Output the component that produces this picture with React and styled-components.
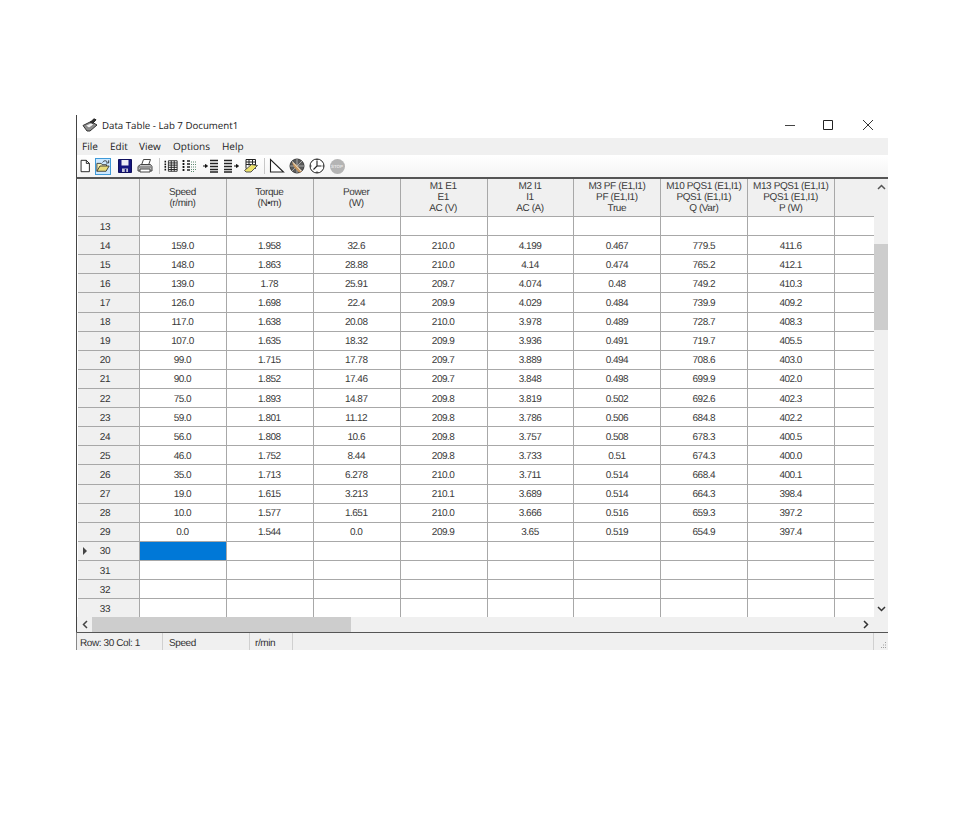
import React from 'react';
import styled, { createGlobalStyle } from 'styled-components';

const columns = [
  ['Speed', '(r/min)'],
  ['Torque', '(N•m)'],
  ['Power', '(W)'],
  ['M1 E1', 'E1', 'AC (V)'],
  ['M2 I1', 'I1', 'AC (A)'],
  ['M3 PF (E1,I1)', 'PF (E1,I1)', 'True'],
  ['M10 PQS1 (E1,I1)', 'PQS1 (E1,I1)', 'Q (Var)'],
  ['M13 PQS1 (E1,I1)', 'PQS1 (E1,I1)', 'P (W)'],
];

const rows = [
  [13],
  [14, '159.0', '1.958', '32.6', '210.0', '4.199', '0.467', '779.5', '411.6'],
  [15, '148.0', '1.863', '28.88', '210.0', '4.14', '0.474', '765.2', '412.1'],
  [16, '139.0', '1.78', '25.91', '209.7', '4.074', '0.48', '749.2', '410.3'],
  [17, '126.0', '1.698', '22.4', '209.9', '4.029', '0.484', '739.9', '409.2'],
  [18, '117.0', '1.638', '20.08', '210.0', '3.978', '0.489', '728.7', '408.3'],
  [19, '107.0', '1.635', '18.32', '209.9', '3.936', '0.491', '719.7', '405.5'],
  [20, '99.0', '1.715', '17.78', '209.7', '3.889', '0.494', '708.6', '403.0'],
  [21, '90.0', '1.852', '17.46', '209.7', '3.848', '0.498', '699.9', '402.0'],
  [22, '75.0', '1.893', '14.87', '209.8', '3.819', '0.502', '692.6', '402.3'],
  [23, '59.0', '1.801', '11.12', '209.8', '3.786', '0.506', '684.8', '402.2'],
  [24, '56.0', '1.808', '10.6', '209.8', '3.757', '0.508', '678.3', '400.5'],
  [25, '46.0', '1.752', '8.44', '209.8', '3.733', '0.51', '674.3', '400.0'],
  [26, '35.0', '1.713', '6.278', '210.0', '3.711', '0.514', '668.4', '400.1'],
  [27, '19.0', '1.615', '3.213', '210.1', '3.689', '0.514', '664.3', '398.4'],
  [28, '10.0', '1.577', '1.651', '210.0', '3.666', '0.516', '659.3', '397.2'],
  [29, '0.0', '1.544', '0.0', '209.9', '3.65', '0.519', '654.9', '397.4'],
  [30],
  [31],
  [32],
  [33],
];

const Icon = ({ children, size = 16 }) => (
  <svg width={size} height={size} viewBox="0 0 16 16" fill="none" stroke="#111" strokeWidth="1">
    {children}
  </svg>
);

const barStack = (x, w) => (
  <path
    d={[2.5, 5.5, 8.5, 11.5, 14].map((y) => `M${x} ${y}h${w}`).join('')}
    stroke="#222"
    strokeWidth="1.500"
  />
);

const tools = [
  { w: 14, icon: <path d="M3.500 1.500h6l3.500 3.500v9.500h-9.500zM9.500 1.500V5H13" fill="#fff" /> },
  {
    w: 22,
    active: true,
    icon: (
      <>
        <path d="M1 14V5h5l1 1.500h5V9" fill="#f6f2b4" stroke="#333" />
        <path d="M1 14l3.500-6H15l-3.500 6z" fill="#e9dc78" stroke="#333" />
        <path d="M7.500 4C9 1.500 11.500 1.500 13 3.500M14.500 1.500v3h-3" stroke="#222" />
      </>
    ),
  },
  {
    w: 22,
    icon: (
      <>
        <path d="M1.500 1.500h13v13h-13z" fill="#15157f" stroke="#10105e" />
        <path d="M4.500 2h7v5.500h-7z" fill="#eeeef6" stroke="none" />
        <path d="M5 10.500h6V14H5z" fill="#c8c8d8" stroke="none" />
        <path d="M8.500 11v3" stroke="#15157f" strokeWidth="1.500" />
      </>
    ),
  },
  {
    w: 18,
    icon: (
      <>
        <path d="M4.500 7l2-5.500h7L11.500 7" fill="#fff" stroke="#444" />
        <path d="M1 8.500L3.500 6.500h10L15 8.500v4.500H1z" fill="#c4c4c4" stroke="#444" />
        <path d="M3 11h10v3H3z" fill="#fff" stroke="#444" />
        <path d="M2 9h12" stroke="#666" />
      </>
    ),
  },
  { sep: true, w: 10 },
  {
    w: 14,
    icon: (
      <>
        <path d="M1.500 2v12" strokeWidth="1.800" strokeDasharray="2 1" />
        <path d="M5 2h10v12H5z" fill="#fff" stroke="#222" />
        <path d="M5 4.500h10M5 7h10M5 9.500h10M5 12h10M8.300 2v12M11.700 2v12" stroke="#222" strokeWidth="1.100" />
      </>
    ),
  },
  { w: 2 },
  {
    w: 20,
    icon: (
      <>
        <path d="M1.500 2v12" strokeWidth="1.800" strokeDasharray="2 1" />
        <path d="M5 3h3M5 6h3M5 9h3M5 12h3" stroke="#222" strokeWidth="1.500" />
        <path d="M9 4h6M9 6.500h6M9 9h6M9 11.500h6M9 13.500h4" stroke="#5d8a70" strokeWidth="1.200" strokeDasharray="1 1" />
      </>
    ),
  },
  { w: 1 },
  {
    w: 20,
    icon: (
      <>
        <path d="M0 8h3" />
        <path d="M2.500 6.500L4.500 8l-2 1.500z" fill="#111" />
        {barStack(7, 8)}
      </>
    ),
  },
  {
    w: 20,
    icon: (
      <>
        {barStack(1, 8)}
        <path d="M11 8h3" />
        <path d="M13.500 6.500L15.500 8l-2 1.500z" fill="#111" />
      </>
    ),
  },
  {
    w: 20,
    icon: (
      <>
        <path d="M3 1.500h9.500v9H3z" fill="#fff" stroke="#222" />
        <path d="M3 4h9.500M3 6.500h9.500M6 1.500v6M9.500 1.500v6" stroke="#222" />
        <path d="M1.500 12.500L8.500 6.500l6 1-6.500 6.500H3z" fill="#eee36a" stroke="#555" />
      </>
    ),
  },
  { sep: true, w: 6 },
  {
    w: 20,
    icon: <path d="M1.500 1.500v12.500H14.500z" fill="#fff" stroke="#222" strokeWidth="1.100" />,
  },
  {
    w: 20,
    icon: (
      <>
        <circle cx="8" cy="8" r="7" fill="#5a5a5a" stroke="#333" />
        <path d="M8 1v14M1 8h14M3 3l10 10M13 3L3 13" stroke="#bdbdbd" strokeWidth=".8" />
        <path d="M3 4l4 2.500 6 7-3 1-5-5.500z" fill="#c9985f" stroke="none" />
        <path d="M4 4.500l8 8.500" stroke="#e8dcc8" strokeWidth="1" />
      </>
    ),
  },
  {
    w: 20,
    icon: (
      <>
        <circle cx="8" cy="8" r="7" fill="#fff" stroke="#222" />
        <path d="M8 3v5M8 8l-3.500 3.500M8 8h4.500" stroke="#222" strokeWidth="1.100" />
        <path d="M8 1v1.500M15 8h-1.500M1 8h1.500M8 15v-1.500" stroke="#222" strokeWidth="1.200" />
      </>
    ),
  },
  { w: 20, stop: true },
];

const App = () => (
  <>
    <GlobalStyle />
    <Window>
      <TitleBar>
        <TitleGroup>
          <svg width="16" height="14" viewBox="0 0 16 14" fill="none">
            <path d="M1 7.500L9 3.500l6 3.500-7 6H5z" fill="#8f8f8f" stroke="#333" />
            <path d="M3.500 7.500L9 5l3 1.500-5 3.500z" fill="#f2f2f2" stroke="#666" strokeWidth=".6" />
            <path d="M8 4.500L12 .8l2 1-3.500 3.800" fill="#333" stroke="#222" />
          </svg>
          <TitleText>Data Table - Lab 7 Document1</TitleText>
        </TitleGroup>
        <WindowControls>
          <ControlButton $w={32}>
            <svg width="10" height="10" viewBox="0 0 10 10"><path d="M0 5.500h10" stroke="#444" /></svg>
          </ControlButton>
          <ControlButton $w={44}>
            <svg width="10" height="10" viewBox="0 0 10 10" fill="none"><path d="M.5.500h9v9h-9z" stroke="#222" /></svg>
          </ControlButton>
          <ControlButton $w={36}>
            <svg width="10" height="10" viewBox="0 0 10 10"><path d="M0 0l10 10M10 0L0 10" stroke="#333" /></svg>
          </ControlButton>
        </WindowControls>
      </TitleBar>
      <MenuBar>
        <MenuItem $w={28}>File</MenuItem>
        <MenuItem $w={29}>Edit</MenuItem>
        <MenuItem $w={34}>View</MenuItem>
        <MenuItem $w={49}>Options</MenuItem>
        <MenuItem $w={30}>Help</MenuItem>
      </MenuBar>
      <Toolbar>
        {tools.map((tool, i) =>
          tool.sep ? (
            <ToolSeparator key={i} $w={tool.w} />
          ) : (
            <ToolSlot key={i} $w={tool.w}>
              {tool.active ? <ActiveBox><Icon size={14}>{tool.icon}</Icon></ActiveBox> : null}
              {!tool.active && tool.icon ? <Icon>{tool.icon}</Icon> : null}
              {tool.stop ? <StopBadge>STOP</StopBadge> : null}
            </ToolSlot>
          ),
        )}
      </Toolbar>
      <GridArea>
        <GridColumn>
          <HeaderRow>
            <CornerCell />
            {columns.map((lines, i) => (
              <HeaderCell key={i}>
                {lines.map((line) => (
                  <div key={line}>{line}</div>
                ))}
              </HeaderCell>
            ))}
            <FillerHeader />
          </HeaderRow>
          {rows.map(([number, ...values]) => (
            <DataRow key={number}>
              <RowHeader>
                {number === 30 ? <RowMarker /> : null}
                {number}
              </RowHeader>
              {columns.map((_, i) => (
                <Cell key={i} $selected={number === 30 && i === 0}>
                  {values[i]}
                </Cell>
              ))}
              <Cell />
            </DataRow>
          ))}
        </GridColumn>
        <VerticalBar>
          <svg width="9" height="6" viewBox="0 0 9 6" fill="none"><path d="M1 5l3.500-3.500L8 5" stroke="#555" strokeWidth="1.500" /></svg>
          <VerticalThumb />
          <svg width="9" height="6" viewBox="0 0 9 6" fill="none"><path d="M1 1l3.500 3.500L8 1" stroke="#333" strokeWidth="1.500" /></svg>
        </VerticalBar>
      </GridArea>
      <HorizontalBar>
        <svg width="6" height="9" viewBox="0 0 6 9" fill="none"><path d="M5 1L1.500 4.500 5 8" stroke="#444" strokeWidth="1.500" /></svg>
        <HorizontalThumb />
        <svg width="6" height="9" viewBox="0 0 6 9" fill="none"><path d="M1 1l3.500 3.500L1 8" stroke="#333" strokeWidth="1.500" /></svg>
      </HorizontalBar>
      <StatusBar>
        <StatusCell $w={83}>Row: 30 Col: 1</StatusCell>
        <StatusCell $w={87} $indent={6}>Speed</StatusCell>
        <StatusCell $w={43} $indent={5}>r/min</StatusCell>
        <StatusFiller />
        <Grip>
          <svg width="8" height="8" viewBox="0 0 8 8">
            <path d="M6 1h1v1H6zM4 3.500h1v1H4zM6 3.500h1v1H6zM2 6h1v1H2zM4 6h1v1H4zM6 6h1v1H6z" fill="#a0a0a0" />
          </svg>
        </Grip>
      </StatusBar>
    </Window>
  </>
);

export default App;

const GlobalStyle = createGlobalStyle`
  html, body {
    margin: 0;
    background: #fff;
  }
  * {
    box-sizing: border-box;
  }
`;

const Window = styled.div`
  width: 812px;
  margin: 115px 0 0 76px;
  color: #333;
  font-family: 'Liberation Sans', Arial, sans-serif;
  text-rendering: geometricPrecision;
`;

const TitleBar = styled.div`
  display: flex;
  align-items: center;
  justify-content: space-between;
  height: 23px;
  padding: 0 0 3px 5px;
  border-left: 1px solid #444;
`;

const TitleGroup = styled.div`
  display: flex;
  align-items: center;
  gap: 4px;
`;

const TitleText = styled.span`
  font-family: 'Open Sans', sans-serif;
  font-size: 9.7px;
  color: #222;
`;

const WindowControls = styled.div`
  display: flex;
  margin: 0 2px 1px 0;
`;

const ControlButton = styled.div`
  display: flex;
  align-items: center;
  justify-content: center;
  width: ${(p) => p.$w}px;
  height: 20px;
`;

const MenuBar = styled.div`
  display: flex;
  align-items: center;
  height: 17px;
  padding: 0 0 2px 5px;
  background: #f0f0f0;
  border-left: 1px solid #444;
  font-family: 'Open Sans', sans-serif;
  font-size: 10px;
  color: #222;
`;

const MenuItem = styled.span`
  width: ${(p) => p.$w}px;
`;

const Toolbar = styled.div`
  display: flex;
  align-items: center;
  height: 24px;
  padding-left: 1px;
  background: linear-gradient(#ffffff, #f4f4f4);
  border-left: 1px solid #444;
  border-bottom: 2px solid #555;
`;

const ToolSlot = styled.div`
  display: flex;
  align-items: center;
  justify-content: center;
  flex: none;
  width: ${(p) => p.$w}px;
`;

const ActiveBox = styled.div`
  display: flex;
  align-items: center;
  justify-content: center;
  width: 16px;
  height: 17px;
  background: #cce8ff;
  border: 1px solid #3f9ad8;
`;

const ToolSeparator = styled.div`
  flex: none;
  width: ${(p) => p.$w}px;
  height: 16px;
  background: linear-gradient(#c8c8c8, #c8c8c8) center / 1px 100% no-repeat;
`;

const StopBadge = styled.div`
  display: flex;
  align-items: center;
  justify-content: center;
  width: 15px;
  height: 15px;
  border-radius: 50%;
  background: #b4b4b4;
  color: #e4e4e4;
  font-size: 4.500px;
  font-weight: bold;
`;

const GridArea = styled.div`
  display: flex;
  height: 438px;
  padding-left: 1px;
  border-left: 1px solid #444;
`;

const GridColumn = styled.div`
  flex: 1;
  overflow: hidden;
`;

const HeaderRow = styled.div`
  display: grid;
  grid-template-columns: 62px repeat(8, 86.9px) 1fr;
  height: 38px;
  background: #f0f0f0;
  border-bottom: 1px solid #a8a8a8;
`;

const CornerCell = styled.div`
  border-right: 1px solid #a8a8a8;
`;

const HeaderCell = styled.div`
  display: flex;
  flex-direction: column;
  justify-content: center;
  padding-right: 1px;
  border-right: 1px solid #a8a8a8;
  font-size: 10px;
  letter-spacing: -0.4px;
  line-height: 11px;
  text-align: center;
  color: #3a3a3a;
`;

const FillerHeader = styled.div``;

const DataRow = styled.div`
  display: grid;
  grid-template-columns: 62px repeat(8, 86.9px) 1fr;
  height: 19.12px;
`;

const RowHeader = styled.div`
  position: relative;
  display: flex;
  align-items: center;
  justify-content: center;
  padding: 2px 7px 0 0;
  background: #f0f0f0;
  border-right: 1px solid #a8a8a8;
  border-bottom: 1px solid #a8a8a8;
  font-size: 10px;
  letter-spacing: -0.3px;
  color: #333;
`;

const RowMarker = styled.span`
  position: absolute;
  left: 5px;
  top: 5px;
  border-left: 4px solid #444;
  border-top: 4px solid transparent;
  border-bottom: 4px solid transparent;
`;

const Cell = styled.div`
  display: flex;
  align-items: center;
  justify-content: center;
  padding: 2px 1px 0 0;
  background: ${(p) => (p.$selected ? '#0078d7' : '#fff')};
  border-right: 1px solid #a8a8a8;
  border-bottom: 1px solid #a8a8a8;
  font-size: 10px;
  letter-spacing: -0.5px;
  color: #3a3a3a;

  &:last-child {
    border-right: 0;
  }
`;

const VerticalBar = styled.div`
  position: relative;
  display: flex;
  flex-direction: column;
  align-items: center;
  justify-content: space-between;
  flex: none;
  width: 14px;
  padding: 5px 0 5px;
  background: #f0f0f0;
`;

const VerticalThumb = styled.div`
  position: absolute;
  top: 65px;
  left: 0;
  width: 100%;
  height: 86px;
  background: #cdcdcd;
`;

const HorizontalBar = styled.div`
  position: relative;
  display: flex;
  align-items: center;
  justify-content: space-between;
  height: 15px;
  padding: 0 19px 0 5px;
  background: #f0f0f0;
  border-left: 1px solid #444;
`;

const HorizontalThumb = styled.div`
  position: absolute;
  left: 15px;
  top: 0;
  width: 259px;
  height: 100%;
  background: #cdcdcd;
`;

const StatusBar = styled.div`
  display: flex;
  height: 18px;
  padding-left: 3px;
  background: #f0f0f0;
  border-top: 1px solid #555;
  border-left: 1px solid #888;
  font-size: 10px;
  letter-spacing: -0.4px;
  color: #333;
`;

const StatusCell = styled.div`
  display: flex;
  align-items: center;
  flex: none;
  width: ${(p) => p.$w}px;
  padding: 3px 0 0 ${(p) => p.$indent || 0}px;
  border-right: 1px solid #d0d0d0;
`;

const StatusFiller = styled.div`
  flex: 1;
  border-right: 1px solid #d0d0d0;
`;

const Grip = styled.div`
  display: flex;
  align-items: flex-end;
  justify-content: flex-end;
  flex: none;
  width: 14px;
  padding: 0 1px 1px 0;
`;
